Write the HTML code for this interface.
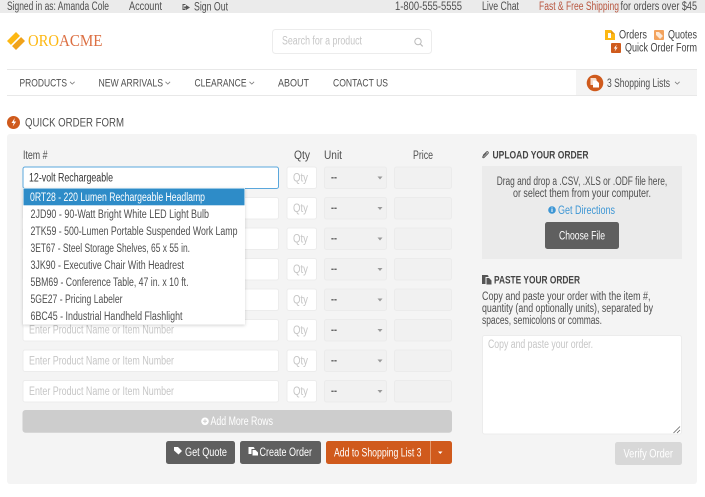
<!DOCTYPE html>
<html><head><meta charset="utf-8"><style>
html,body{margin:0;padding:0;background:#fff;width:705px;height:497px;overflow:hidden}
svg{display:block;filter:blur(.25px)}
text{font-family:"Liberation Sans",sans-serif;font-size:11.5px;fill:#4f4f4f}
.d{fill:#444}.ph{fill:#c6c6c6}.w{fill:#fff}.b{font-weight:bold;font-size:11px}
.in{fill:#fff;stroke:#ececec}.dis{fill:#f1f1f1;stroke:#ebebeb}
.ch{fill:none;stroke:#777;stroke-width:.8}
.n{font-size:11px}.dd{font-size:11.500px;font-weight:bold;fill:#666}
</style></head><body>
<svg width="705" height="497" viewBox="0 0 705 497" xmlns="http://www.w3.org/2000/svg">
<defs><filter id="sh" x="-5%" y="-5%" width="110%" height="115%"><feDropShadow dx="0" dy="1" stdDeviation="1.5" flood-color="#000" flood-opacity=".18"/></filter></defs>
<rect width="705" height="13" fill="#ebebeb"/>
<text x="7" y="10" textLength="102" lengthAdjust="spacingAndGlyphs">Signed in as: Amanda Cole</text>
<text x="129" y="10" textLength="33" lengthAdjust="spacingAndGlyphs">Account</text>
<path d="M182.500 4h3v1h-2v4h2v1h-3zM186 5v1.500h-1.800v2H186V10L190 7.500z" fill="#555"/>
<text x="194" y="10.500" textLength="34" lengthAdjust="spacingAndGlyphs">Sign Out</text>
<text x="395" y="10" textLength="67" lengthAdjust="spacingAndGlyphs">1-800-555-5555</text>
<text x="482" y="10" textLength="37" lengthAdjust="spacingAndGlyphs">Live Chat</text>
<text x="539" y="10" textLength="80" lengthAdjust="spacingAndGlyphs" style="fill:#b8563f">Fast &amp; Free Shipping</text>
<text x="620.500" y="10" textLength="76.500" lengthAdjust="spacingAndGlyphs">for orders over $45</text>

<path d="M7 41l9-9 4 4-9 9z" fill="#fdb813"/>
<path d="M12 46l9-9 4 4-9 9z" fill="#f0a21a"/>
<path d="M11 45l9-9 1 1-9 9z" fill="#fff"/>
<text x="28" y="46" textLength="31" lengthAdjust="spacingAndGlyphs" style="font:17px 'Liberation Serif',serif;fill:#fdb813">ORO</text>
<text x="59" y="46" textLength="43.500" lengthAdjust="spacingAndGlyphs" style="font:17px 'Liberation Serif',serif;fill:#dc6f42">ACME</text>

<rect x="272.500" y="29.500" width="159" height="24" rx="3" fill="#fff" stroke="#ececec"/>
<text x="282" y="44.500" textLength="80" lengthAdjust="spacingAndGlyphs" class="ph">Search for a product</text>
<circle cx="418" cy="41.500" r="3.200" fill="none" stroke="#bbb" stroke-width="1"/>
<path d="M420.300 44l2.400 2.400" stroke="#bbb" stroke-width="1.200"/>

<path d="M605 30h6l4 4v6h-10z" fill="#fdb813"/><path d="M608 33h3v5h-3z" fill="#fff"/><path d="M611 30l4 4h-4z" fill="#e79a10"/>
<text x="619" y="38.500" textLength="28" lengthAdjust="spacingAndGlyphs" class="d">Orders</text>
<rect x="654" y="30" width="10" height="10" rx="1" fill="#f3a25c"/><path d="M656 32h3l4 4-3 3-4-4z" fill="#fff" opacity=".75"/>
<text x="668" y="38.500" textLength="29" lengthAdjust="spacingAndGlyphs" class="d">Quotes</text>
<rect x="611" y="43" width="10" height="10" rx="1" fill="#cf5a1c"/><path d="M616.800 44.500l-3 4h1.800l-1 3 3-4h-1.800z" fill="#fff"/>
<text x="625" y="51.500" textLength="72" lengthAdjust="spacingAndGlyphs" class="d">Quick Order Form</text>

<rect x="576" y="70" width="121" height="25" fill="#f4f4f4"/>
<path d="M7 69.500h690M7 95.500h690" stroke="#e8e8e8"/>
<text class="n" x="19.500" y="86.500" textLength="47.500" lengthAdjust="spacingAndGlyphs">PRODUCTS</text>
<path class="ch" d="M70 81.800l2.300 2.300 2.300-2.300"/>
<text class="n" x="98.500" y="86.500" textLength="64.500" lengthAdjust="spacingAndGlyphs">NEW ARRIVALS</text>
<path class="ch" d="M165.500 81.800l2.300 2.300 2.300-2.300"/>
<text class="n" x="194.500" y="86.500" textLength="52" lengthAdjust="spacingAndGlyphs">CLEARANCE</text>
<path class="ch" d="M249.500 81.800l2.300 2.300 2.300-2.300"/>
<text class="n" x="278" y="86.500" textLength="31" lengthAdjust="spacingAndGlyphs">ABOUT</text>
<text class="n" x="333" y="86.500" textLength="55" lengthAdjust="spacingAndGlyphs">CONTACT US</text>
<circle cx="595" cy="83" r="8.300" fill="#cf5a1c"/>
<path d="M590.500 78h5l1 1v6h-6z" fill="#f6dccb"/><path d="M593 80.500h3.500l2.500 2.500v4.500h-6z" fill="#fff"/>
<text x="607" y="87" textLength="63" lengthAdjust="spacingAndGlyphs">3 Shopping Lists</text>
<path class="ch" d="M675 81.800l2.300 2.300 2.300-2.300"/>

<circle cx="13.500" cy="122.500" r="6.500" fill="#cf5a1c"/>
<path d="M14.800 118l-3.300 5h2.200l-1 3.500 3.500-5h-2.200z" fill="#fff"/>
<text x="25" y="126.500" textLength="99" lengthAdjust="spacingAndGlyphs" style="font-size:12px">QUICK ORDER FORM</text>

<rect x="7" y="134" width="690" height="350" rx="3" fill="#f4f4f4"/>
<text x="23" y="159" textLength="24.500" lengthAdjust="spacingAndGlyphs">Item #</text>
<text x="294" y="159" textLength="16" lengthAdjust="spacingAndGlyphs">Qty</text>
<text x="324" y="159" textLength="18" lengthAdjust="spacingAndGlyphs">Unit</text>
<text x="413" y="159" textLength="20" lengthAdjust="spacingAndGlyphs">Price</text>

<!-- row 1 -->
<rect x="23" y="167" width="255.500" height="21.500" rx="2" fill="#fff" stroke="#5aa7dc"/>
<text x="29" y="181.500" textLength="84" lengthAdjust="spacingAndGlyphs" style="fill:#333">12-volt Rechargeable</text>
<rect class="in" x="287" y="167" width="29.500" height="21.500" rx="2"/>
<text class="ph" x="293" y="181.500" textLength="15" lengthAdjust="spacingAndGlyphs">Qty</text>
<rect class="dis" x="324.500" y="167" width="62" height="21.500" rx="2"/>
<text class="dd" x="331" y="181" textLength="6" lengthAdjust="spacingAndGlyphs">--</text><path d="M377.500 176.500h5l-2.500 3z" fill="#999"/>
<rect class="dis" x="394.500" y="167" width="57" height="21.500" rx="2"/>
<!-- row 2 -->
<rect class="in" x="23" y="197.500" width="255.500" height="21.500" rx="2"/>
<rect class="in" x="287" y="197.500" width="29.500" height="21.500" rx="2"/>
<text class="ph" x="293" y="212" textLength="15" lengthAdjust="spacingAndGlyphs">Qty</text>
<rect class="dis" x="324.500" y="197.500" width="62" height="21.500" rx="2"/>
<text class="dd" x="331" y="211.500" textLength="6" lengthAdjust="spacingAndGlyphs">--</text><path d="M377.500 207h5l-2.500 3z" fill="#999"/>
<rect class="dis" x="394.500" y="197.500" width="57" height="21.500" rx="2"/>
<!-- row 3 -->
<rect class="in" x="23" y="228" width="255.500" height="21.500" rx="2"/>
<rect class="in" x="287" y="228" width="29.500" height="21.500" rx="2"/>
<text class="ph" x="293" y="242.500" textLength="15" lengthAdjust="spacingAndGlyphs">Qty</text>
<rect class="dis" x="324.500" y="228" width="62" height="21.500" rx="2"/>
<text class="dd" x="331" y="242" textLength="6" lengthAdjust="spacingAndGlyphs">--</text><path d="M377.500 237.500h5l-2.500 3z" fill="#999"/>
<rect class="dis" x="394.500" y="228" width="57" height="21.500" rx="2"/>
<!-- row 4 -->
<rect class="in" x="23" y="258.500" width="255.500" height="21.500" rx="2"/>
<rect class="in" x="287" y="258.500" width="29.500" height="21.500" rx="2"/>
<text class="ph" x="293" y="273" textLength="15" lengthAdjust="spacingAndGlyphs">Qty</text>
<rect class="dis" x="324.500" y="258.500" width="62" height="21.500" rx="2"/>
<text class="dd" x="331" y="272.500" textLength="6" lengthAdjust="spacingAndGlyphs">--</text><path d="M377.500 268h5l-2.500 3z" fill="#999"/>
<rect class="dis" x="394.500" y="258.500" width="57" height="21.500" rx="2"/>
<!-- row 5 -->
<rect class="in" x="23" y="289" width="255.500" height="21.500" rx="2"/>
<rect class="in" x="287" y="289" width="29.500" height="21.500" rx="2"/>
<text class="ph" x="293" y="303.500" textLength="15" lengthAdjust="spacingAndGlyphs">Qty</text>
<rect class="dis" x="324.500" y="289" width="62" height="21.500" rx="2"/>
<text class="dd" x="331" y="303" textLength="6" lengthAdjust="spacingAndGlyphs">--</text><path d="M377.500 298.500h5l-2.500 3z" fill="#999"/>
<rect class="dis" x="394.500" y="289" width="57" height="21.500" rx="2"/>
<!-- row 6 -->
<rect class="in" x="23" y="319.500" width="255.500" height="21.500" rx="2"/>
<text class="ph" x="29" y="333.500" textLength="145" lengthAdjust="spacingAndGlyphs">Enter Product Name or Item Number</text>
<rect class="in" x="287" y="319.500" width="29.500" height="21.500" rx="2"/>
<text class="ph" x="293" y="334" textLength="15" lengthAdjust="spacingAndGlyphs">Qty</text>
<rect class="dis" x="324.500" y="319.500" width="62" height="21.500" rx="2"/>
<text class="dd" x="331" y="333.500" textLength="6" lengthAdjust="spacingAndGlyphs">--</text><path d="M377.500 329h5l-2.500 3z" fill="#999"/>
<rect class="dis" x="394.500" y="319.500" width="57" height="21.500" rx="2"/>
<!-- row 7 -->
<rect class="in" x="23" y="350" width="255.500" height="21.500" rx="2"/>
<text class="ph" x="29" y="364.500" textLength="145" lengthAdjust="spacingAndGlyphs">Enter Product Name or Item Number</text>
<rect class="in" x="287" y="350" width="29.500" height="21.500" rx="2"/>
<text class="ph" x="293" y="364.500" textLength="15" lengthAdjust="spacingAndGlyphs">Qty</text>
<rect class="dis" x="324.500" y="350" width="62" height="21.500" rx="2"/>
<text class="dd" x="331" y="364" textLength="6" lengthAdjust="spacingAndGlyphs">--</text><path d="M377.500 359.500h5l-2.500 3z" fill="#999"/>
<rect class="dis" x="394.500" y="350" width="57" height="21.500" rx="2"/>
<!-- row 8 -->
<rect class="in" x="23" y="380.500" width="255.500" height="21.500" rx="2"/>
<text class="ph" x="29" y="395" textLength="145" lengthAdjust="spacingAndGlyphs">Enter Product Name or Item Number</text>
<rect class="in" x="287" y="380.500" width="29.500" height="21.500" rx="2"/>
<text class="ph" x="293" y="395" textLength="15" lengthAdjust="spacingAndGlyphs">Qty</text>
<rect class="dis" x="324.500" y="380.500" width="62" height="21.500" rx="2"/>
<text class="dd" x="331" y="394.500" textLength="6" lengthAdjust="spacingAndGlyphs">--</text><path d="M377.500 390h5l-2.500 3z" fill="#999"/>
<rect class="dis" x="394.500" y="380.500" width="57" height="21.500" rx="2"/>

<!-- dropdown -->
<rect x="23" y="188" width="222" height="136.500" fill="#fff" filter="url(#sh)"/>
<rect x="23.500" y="188.500" width="221" height="16.800" fill="#2e8cc8"/>
<text class="w" x="30" y="201" textLength="175" lengthAdjust="spacingAndGlyphs">0RT28 - 220 Lumen Rechargeable Headlamp</text>
<text x="30.500" y="218" textLength="178.500" lengthAdjust="spacingAndGlyphs">2JD90 - 90-Watt Bright White LED Light Bulb</text>
<text x="30.500" y="235" textLength="207" lengthAdjust="spacingAndGlyphs">2TK59 - 500-Lumen Portable Suspended Work Lamp</text>
<text x="30.500" y="252" textLength="159.500" lengthAdjust="spacingAndGlyphs">3ET67 - Steel Storage Shelves, 65 x 55 in.</text>
<text x="30.500" y="269" textLength="153.500" lengthAdjust="spacingAndGlyphs">3JK90 - Executive Chair With Headrest</text>
<text x="30.500" y="286" textLength="158" lengthAdjust="spacingAndGlyphs">5BM69 - Conference Table, 47 in. x 10 ft.</text>
<text x="30.500" y="303" textLength="92" lengthAdjust="spacingAndGlyphs">5GE27 - Pricing Labeler</text>
<text x="30.500" y="320" textLength="152" lengthAdjust="spacingAndGlyphs">6BC45 - Industrial Handheld Flashlight</text>

<!-- buttons -->
<rect x="22.500" y="410" width="429.500" height="22.700" rx="3" fill="#cdcdcd"/>
<circle cx="205" cy="421.300" r="3.800" fill="#fff"/><path d="M203 421.300h4M205 419.300v4" stroke="#cdcdcd"/>
<text class="w" x="210.500" y="425" textLength="62.500" lengthAdjust="spacingAndGlyphs">Add More Rows</text>

<rect x="166" y="441" width="69" height="23" rx="2.500" fill="#5f5f5f"/>
<path d="M174 447h4l4 4-3.500 3.500-4.500-4z" fill="#fff"/>
<text class="w" x="185" y="456" textLength="42" lengthAdjust="spacingAndGlyphs">Get Quote</text>
<rect x="240" y="441" width="81" height="23" rx="2.500" fill="#5f5f5f"/>
<path d="M248.500 447h5l1 1v1h-3v5h-3z" fill="#fff"/><path d="M252.500 450h3l2.500 2.500v3h-5.500z" fill="#fff"/>
<text class="w" x="259.500" y="456" textLength="52.500" lengthAdjust="spacingAndGlyphs">Create Order</text>
<rect x="326" y="441" width="126" height="23" rx="2.500" fill="#d05a1c"/>
<path d="M430.500 441v23" stroke="#e49a6d"/>
<text class="w" x="334" y="456.500" textLength="87.500" lengthAdjust="spacingAndGlyphs">Add to Shopping List 3</text>
<path d="M438 451.500h4.500l-2.250 2.500z" fill="#fff"/>

<!-- upload -->
<path d="M483 155.500l3.500-3.500c1-1 2.500 .5 1.500 1.500l-4 4c-.8.800-1.800-.2-1-1l3.500-3.500" fill="none" stroke="#555" stroke-width=".9"/>
<text class="b d" x="492.500" y="158.500" textLength="96" lengthAdjust="spacingAndGlyphs">UPLOAD YOUR ORDER</text>
<rect x="482" y="166" width="200" height="93" fill="#ebebeb"/>
<text x="496.700" y="185" textLength="170.500" lengthAdjust="spacingAndGlyphs">Drag and drop a .CSV, .XLS or .ODF file here,</text>
<text x="513" y="197" textLength="138" lengthAdjust="spacingAndGlyphs">or select them from your computer.</text>
<circle cx="552" cy="210" r="3.800" fill="#3d96d4"/><path d="M552 209v3M552 207.500v1" stroke="#fff"/>
<text x="558" y="214" textLength="57" lengthAdjust="spacingAndGlyphs" style="fill:#3d96d4">Get Directions</text>
<rect x="545" y="222" width="74" height="27" rx="2.500" fill="#5f5f5f"/>
<text class="w" x="559" y="239.500" textLength="46" lengthAdjust="spacingAndGlyphs">Choose File</text>

<!-- paste -->
<path d="M482 275h5.500l1 1v1h-3v7h-3.500z" fill="#555"/><path d="M486.500 278h2.500l2.500 2.500v4h-5z" fill="#555"/>
<text class="b d" x="494" y="283.500" textLength="86" lengthAdjust="spacingAndGlyphs">PASTE YOUR ORDER</text>
<text x="482" y="300" textLength="168.500" lengthAdjust="spacingAndGlyphs">Copy and paste your order with the item #,</text>
<text x="482" y="312" textLength="171" lengthAdjust="spacingAndGlyphs">quantity (and optionally units), separated by</text>
<text x="482" y="324" textLength="120" lengthAdjust="spacingAndGlyphs">spaces, semicolons or commas.</text>
<rect class="in" x="482.500" y="335.500" width="199" height="98.500" rx="2"/>
<text class="ph" x="488" y="348" textLength="105" lengthAdjust="spacingAndGlyphs">Copy and paste your order.</text>
<path d="M673.500 433l6.500-6.500M677 433l3-3" stroke="#666" stroke-width=".8"/>
<rect x="615" y="442" width="67" height="23" rx="2.500" fill="#d8d8d8"/>
<text class="w" x="623.500" y="457.500" textLength="49.500" lengthAdjust="spacingAndGlyphs">Verify Order</text>
</svg>
</body></html>
